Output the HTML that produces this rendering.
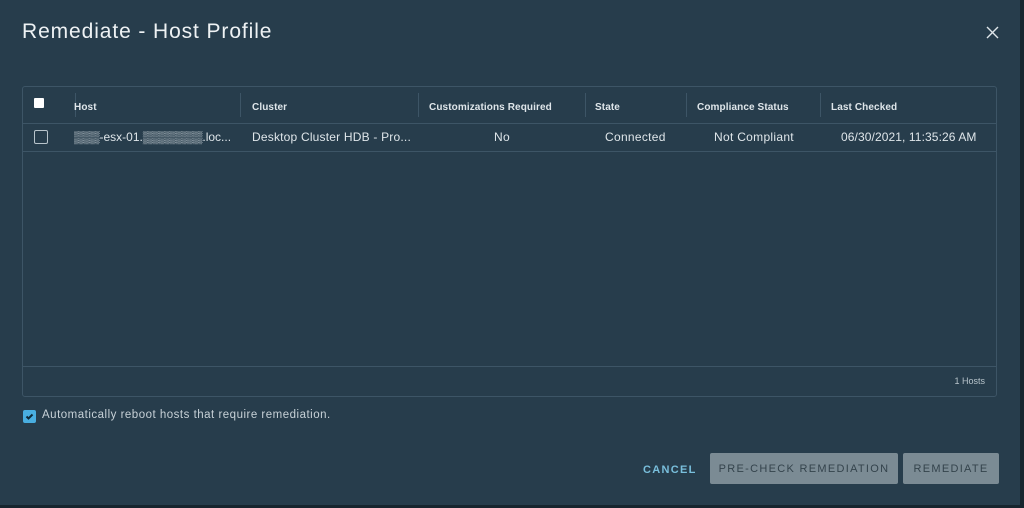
<!DOCTYPE html>
<html><head><style>
body{margin:0;width:1024px;height:508px;background:#17252e;font-family:"Liberation Sans",sans-serif;overflow:hidden;position:relative}
.dlg{position:absolute;left:0;top:0;width:1020px;height:505px;background:#273d4c}
.t{position:absolute;color:#e9eef1}
.tbl{position:absolute;left:22px;top:86px;width:973px;height:309px;border:1px solid #3d5566;border-radius:3px}
.hl{position:absolute;left:0;right:0;height:1px;background:#3d5566}
.vd{position:absolute;top:6px;height:24px;width:1px;background:#3d5566}
.h{position:absolute;top:15px;font-size:10px;font-weight:bold;color:#dfe6ea;letter-spacing:0.1px}
.c{position:absolute;top:43px;font-size:12px;color:#dfe6ea;letter-spacing:0.3px}
.btn{position:absolute;top:453px;height:31px;background:#7b8b94;border-radius:2px;color:#34434c;font-size:11px;letter-spacing:1.3px;line-height:33px;text-align:center}
</style></head><body>
<div class="dlg">
<div class="t" style="left:22px;top:20px;font-size:21px;letter-spacing:0.9px;color:#eef2f4">Remediate - Host Profile</div>
<svg style="position:absolute;left:986px;top:26px" width="13" height="13"><path d="M1 1L12 12M12 1L1 12" stroke="#dfe6ea" stroke-width="1.4"/></svg>
<div class="tbl">
<div style="position:absolute;left:11px;top:11px;width:10px;height:10px;background:#fff;border-radius:1px"></div>
<div class="vd" style="left:52px"></div><div class="vd" style="left:217px"></div><div class="vd" style="left:395px"></div><div class="vd" style="left:562px"></div><div class="vd" style="left:663px"></div><div class="vd" style="left:797px"></div>
<div class="h" style="left:51px">Host</div><div class="h" style="left:229px">Cluster</div><div class="h" style="left:406px">Customizations Required</div><div class="h" style="left:572px">State</div><div class="h" style="left:674px">Compliance Status</div><div class="h" style="left:808px">Last Checked</div>
<div class="hl" style="top:36px"></div>
<div style="position:absolute;left:11px;top:43px;width:12px;height:12px;border:1px solid #b8c4cb;border-radius:2px"></div>
<div class="c" style="left:51px;letter-spacing:0">▒▒▒-esx-01.▒▒▒▒▒▒▒.loc...</div>
<div class="c" style="left:229px;letter-spacing:0.2px">Desktop Cluster HDB - Pro...</div>
<div class="c" style="left:471px">No</div>
<div class="c" style="left:582px">Connected</div>
<div class="c" style="left:691px">Not Compliant</div>
<div class="c" style="left:818px;letter-spacing:0.1px">06/30/2021, 11:35:26 AM</div>
<div class="hl" style="top:64px"></div>
<div class="hl" style="top:279px"></div>
<div style="position:absolute;right:11px;top:289px;font-size:9px;color:#b8c4cb">1 Hosts</div>
</div>
<div style="position:absolute;left:23px;top:410px;width:13px;height:13px;background:#49aee0;border-radius:2px"><svg width="13" height="13"><path d="M3.5 6.5L5.5 8.5L9.5 4.5" stroke="#0f2a38" stroke-width="2" fill="none"/></svg></div>
<div class="t" style="left:42px;top:409px;font-size:11.5px;letter-spacing:0.5px;color:#c7d1d7">Automatically reboot hosts that require remediation.</div>
<div class="t" style="left:643px;top:464px;font-size:11px;font-weight:bold;letter-spacing:1.3px;color:#79bfdc">CANCEL</div>
<div class="btn" style="left:710px;width:188px">PRE-CHECK REMEDIATION</div>
<div class="btn" style="left:903px;width:96px">REMEDIATE</div>
</div>
</body></html>
